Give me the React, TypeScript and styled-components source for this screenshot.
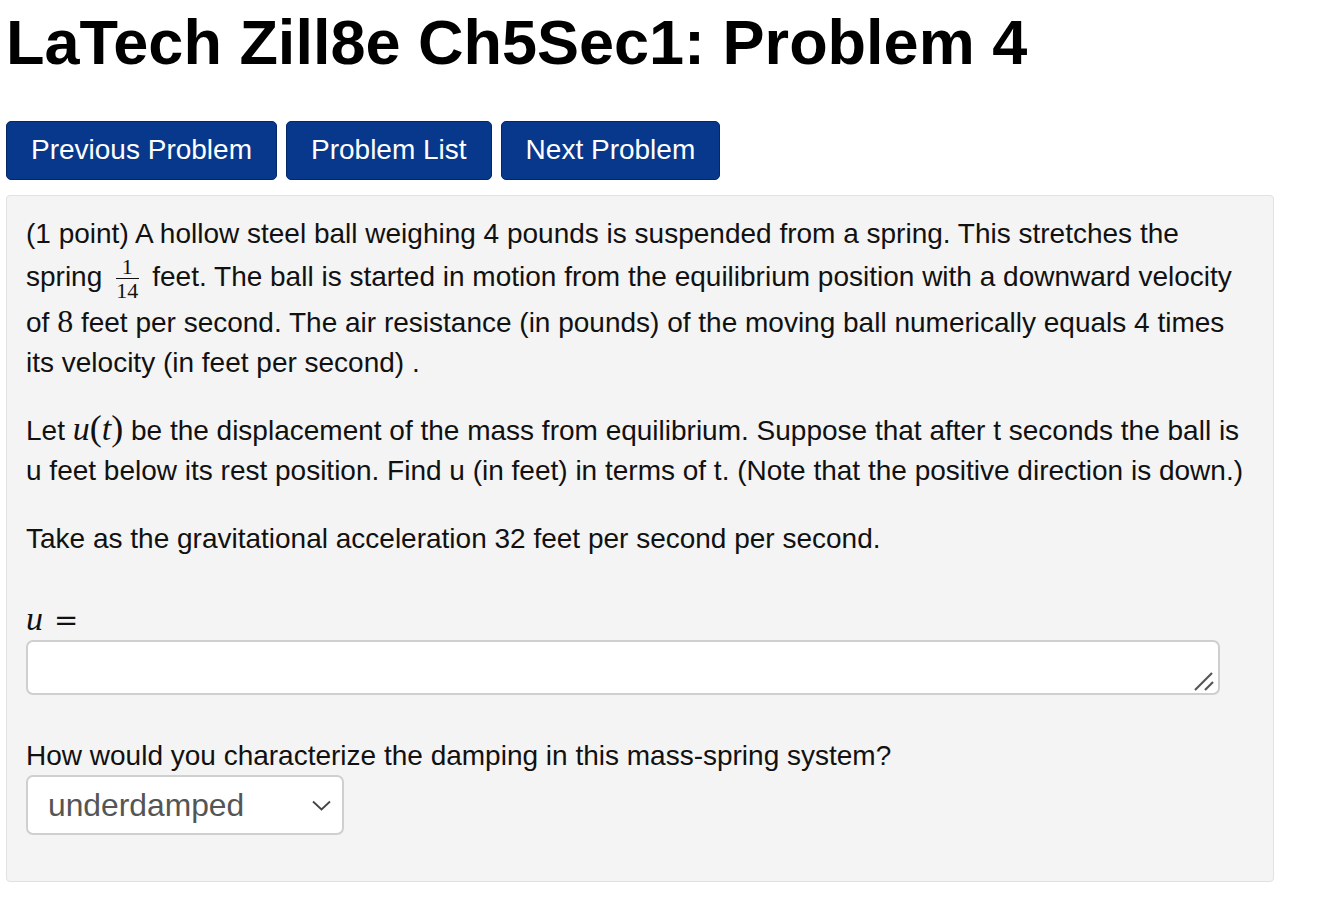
import React from "react";
import styled, { createGlobalStyle } from "styled-components";

const GlobalStyle = createGlobalStyle`
  html, body { margin: 0; padding: 0; background: #ffffff; }
  body { font-family: Arial, "Liberation Sans", sans-serif; color: #000; }
`;

const Page = styled.div`
  padding: 7px 0 0 6px;
  width: 1268px;
`;

const Title = styled.h1`
  margin: 0;
  font-size: 63px;
  font-weight: 700;
  line-height: 71px;
  letter-spacing: 0;
`;

const NavBar = styled.nav`
  display: flex;
  gap: 9px;
  margin-top: 43px;
`;

const NavButton = styled.button`
  font-family: Arial, "Liberation Sans", sans-serif;
  font-size: 28px;
  line-height: 41px;
  padding: 7px 24px 9px;
  color: #fff;
  background: #07388b;
  border: 1px solid #032767;
  border-radius: 5px;
  cursor: pointer;
`;

const Panel = styled.div`
  margin-top: 15px;
  background: #f4f4f4;
  border: 1px solid #e1e1e1;
  border-radius: 4px;
  padding: 18px 19px 46px 19px;
  font-size: 28px;
  line-height: 40px;
  color: #111;
`;

const Para = styled.p<{ $gap?: number }>`
  margin: ${(p) => p.$gap ?? 0}px 0 0 0;
`;

const Frac = styled.span`
  display: inline-flex;
  flex-direction: column;
  align-items: center;
  vertical-align: 12px;
  margin: 0 12px 0 12px;
  font-family: "Liberation Serif", serif;
`;

const Num = styled.span`
  font-size: 22px;
  line-height: 17px;
  padding: 4px 6px 3px;
  border-bottom: 1.5px solid #111;
`;

const Den = styled.span`
  font-size: 22px;
  line-height: 20px;
  padding: 2px 2px 0;
`;

const MathNum = styled.span`
  font-family: "Liberation Serif", serif;
  font-size: 32px;
`;

const MathVar = styled.span`
  font-family: "Liberation Serif", serif;
  font-style: italic;
  font-size: 34px;
`;

const MathParen = styled.span`
  font-family: "Liberation Serif", serif;
  font-size: 36px;
`;

const AnswerLabel = styled.div`
  margin-top: 40px;
  font-family: "Liberation Serif", serif;
  font-size: 31px;
  line-height: 39px;
  display: flex;
  gap: 11px;
  align-items: baseline;
`;

const Equals = styled.span`
  font-family: "DejaVu Serif", serif;
  font-size: 29px;
  font-style: normal;
`;

const AnswerWrap = styled.div`
  position: relative;
  width: 1194px;
`;

const Answer = styled.textarea`
  display: block;
  width: 1194px;
  height: 55px;
  box-sizing: border-box;
  border: 2px solid #cfcfcf;
  border-radius: 7px;
  background: #fff;
  font-family: Arial, "Liberation Sans", sans-serif;
  font-size: 24px;
  padding: 8px 10px;
  resize: none;
`;

const Grip = styled.svg`
  position: absolute;
  right: 4px;
  bottom: 3px;
  pointer-events: none;
`;

const Question = styled.p`
  margin: 41px 0 0 0;
`;

const SelectWrap = styled.div`
  position: relative;
  width: 318px;
  margin-top: -1px;
`;

const Select = styled.select`
  appearance: none;
  -webkit-appearance: none;
  display: block;
  width: 318px;
  height: 60px;
  box-sizing: border-box;
  border: 2px solid #cfcfcf;
  border-radius: 7px;
  background: #fff;
  color: #555;
  font-family: Arial, "Liberation Sans", sans-serif;
  font-size: 31.8px;
  padding: 0 0 0 20px;
`;

const Chevron = styled.svg`
  position: absolute;
  right: 13px;
  top: 25px;
  pointer-events: none;
`;

export default function App() {
  return (
    <>
      <GlobalStyle />
      <Page>
        <Title>LaTech Zill8e Ch5Sec1: Problem 4</Title>
        <NavBar>
          <NavButton>Previous Problem</NavButton>
          <NavButton>Problem List</NavButton>
          <NavButton>Next Problem</NavButton>
        </NavBar>
        <Panel>
          <Para>
            (1 point) A hollow steel ball weighing 4 pounds is suspended from a spring. This stretches the
            spring
            <Frac>
              <Num>1</Num>
              <Den>14</Den>
            </Frac>
            feet. The ball is started in motion from the equilibrium position with a downward velocity of{" "}
            <MathNum>8</MathNum> feet per second. The air resistance (in pounds) of the moving ball
            numerically equals 4 times its velocity (in feet per second) .
          </Para>
          <Para $gap={25}>
            Let{" "}
            <MathVar>u</MathVar>
            <MathParen>(</MathParen>
            <MathVar>t</MathVar>
            <MathParen>)</MathParen> be the displacement of the mass from equilibrium. Suppose that after t
            seconds the ball is u feet below its rest position. Find u (in feet) in terms of t. (Note that
            the positive direction is down.)
          </Para>
          <Para $gap={28}>Take as the gravitational acceleration 32 feet per second per second.</Para>
          <AnswerLabel>
            <MathVar>u</MathVar>
            <Equals>=</Equals>
          </AnswerLabel>
          <AnswerWrap>
            <Answer />
            <Grip width="24" height="24" viewBox="0 0 24 24">
              <path d="M3 22 L20 5" stroke="#555" strokeWidth="2.2" />
              <path d="M13 22 L21 14" stroke="#555" strokeWidth="2.2" />
            </Grip>
          </AnswerWrap>
          <Question>How would you characterize the damping in this mass-spring system?</Question>
          <SelectWrap>
            <Select defaultValue="underdamped">
              <option value="underdamped">underdamped</option>
              <option value="overdamped">overdamped</option>
              <option value="critically damped">critically damped</option>
            </Select>
            <Chevron width="19" height="11" viewBox="0 0 19 11">
              <path d="M1 1.5 L9.5 9.5 L18 1.5" fill="none" stroke="#444" strokeWidth="1.8" />
            </Chevron>
          </SelectWrap>
        </Panel>
      </Page>
    </>
  );
}
